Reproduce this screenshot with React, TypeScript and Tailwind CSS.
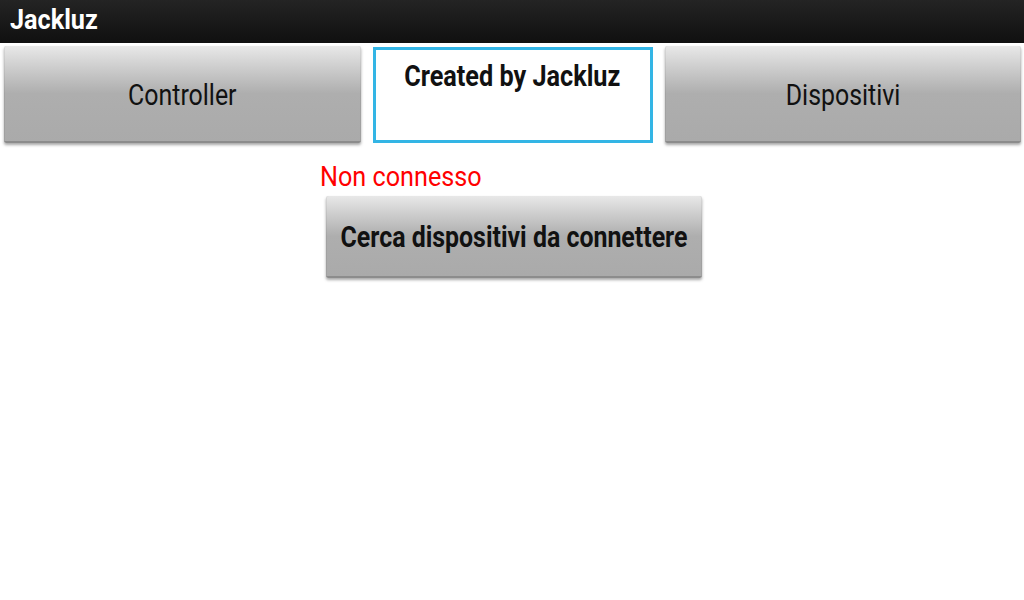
import React from 'react';

const font = { fontFamily: 'Roboto, "Liberation Sans", sans-serif' };

/**
 * Holo style grey button
 */
const HoloButton: React.FC<{ label: string; bold?: boolean; className?: string }> = ({
  label,
  bold,
  className = '',
}) => {
  return (
    <div
      className={`flex items-center justify-center bg-gradient-to-b from-[#e8e8e8] via-[#aeaeae] via-50% to-[#aaaaaa] border-b-2 border-[#8c8c8c] rounded-[2px] shadow-[0_2px_3px_rgba(0,0,0,0.35),inset_1px_0_0_rgba(0,0,0,0.06),inset_-1px_0_0_rgba(0,0,0,0.06)] ${className}`}
    >
      <span
        className={`inline-block scale-x-[0.83] text-[30px] leading-none text-[#111] whitespace-nowrap pt-[2px] ${
          bold ? 'font-bold' : 'font-normal'
        }`}
      >
        {label}
      </span>
    </div>
  );
};

export default function App() {
  return (
    <div className="w-[1024px] h-[600px] bg-white overflow-hidden" style={font}>
      {/* barra titolo */}
      <div className="h-[43px] bg-gradient-to-b from-[#242424] to-[#101010] flex items-center pl-[10px] pb-[3px]">
        <span className="inline-block origin-left scale-x-[0.9] text-[28px] font-bold text-white leading-none">
          Jackluz
        </span>
      </div>

      {/* tab */}
      <div className="flex gap-3 pl-[4px] pr-[3px] pt-[3px]">
        <HoloButton label="Controller" className="flex-1 h-[97px]" />
        <div className="w-[280px] h-[96px] mt-[1px] border-[3px] border-[#33b5e5] bg-white flex justify-center pt-[12px]">
          <span className="inline-block scale-x-[0.87] text-[29px] font-bold text-[#111] leading-none whitespace-nowrap h-fit">
            Created by Jackluz
          </span>
        </div>
        <HoloButton label="Dispositivi" className="flex-1 h-[97px]" />
      </div>

      {/* stato connessione */}
      <div className="flex flex-col items-start pl-[320px] pt-[20px]">
        <span className="inline-block origin-left scale-x-[0.9] text-[28px] text-[#ff0000] leading-none">
          Non connesso
        </span>
        <HoloButton
          label="Cerca dispositivi da connettere"
          bold
          className="ml-[6px] mt-[5px] w-[376px] h-[82px]"
        />
      </div>
    </div>
  );
}
